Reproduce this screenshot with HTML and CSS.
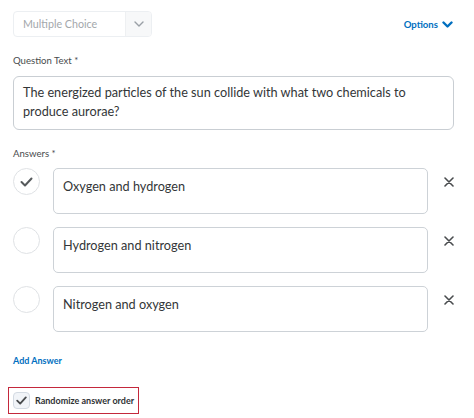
FILE: index.html
```html
<!DOCTYPE html>
<html>
<head>
<meta charset="utf-8">
<link rel="stylesheet" href="styles.css">
</head>
<body>
<div class="page">
  <div class="toprow">
    <div class="select">
      <span class="select-text">Multiple Choice</span>
      <span class="select-btn">
        <svg width="10" height="6" viewBox="0 0 10 6"><path d="M1 1 L5 5 L9 1" fill="none" stroke="#9aa0a6" stroke-width="1.4" stroke-linecap="round" stroke-linejoin="round"/></svg>
      </span>
    </div>
    <div class="options">Options
      <svg width="11" height="8" viewBox="0 0 11 8"><path d="M1.5 1.5 L5.5 5.5 L9.5 1.5" fill="none" stroke="#006fbf" stroke-width="2.4" stroke-linecap="round" stroke-linejoin="round"/></svg>
    </div>
  </div>

  <div class="label q-label">Question Text *</div>
  <div class="textarea">The energized particles of the sun collide with what two chemicals to produce aurorae?</div>

  <div class="label a-label">Answers *</div>
  <div class="answers">
    <div class="answer">
      <span class="radio">
        <svg width="13" height="10" viewBox="0 0 13 10"><path d="M1.5 5 L5 8.5 L11.5 1.5" fill="none" stroke="#565a5c" stroke-width="2" stroke-linecap="round" stroke-linejoin="round"/></svg>
      </span>
      <div class="abox">Oxygen and hydrogen</div>
      <span class="remove">
        <svg width="10" height="10" viewBox="0 0 10 10"><path d="M1 1 L9 9 M9 1 L1 9" stroke="#494c4e" stroke-width="1.6" stroke-linecap="round"/></svg>
      </span>
    </div>
    <div class="answer">
      <span class="radio"></span>
      <div class="abox">Hydrogen and nitrogen</div>
      <span class="remove">
        <svg width="10" height="10" viewBox="0 0 10 10"><path d="M1 1 L9 9 M9 1 L1 9" stroke="#494c4e" stroke-width="1.6" stroke-linecap="round"/></svg>
      </span>
    </div>
    <div class="answer">
      <span class="radio"></span>
      <div class="abox">Nitrogen and oxygen</div>
      <span class="remove">
        <svg width="10" height="10" viewBox="0 0 10 10"><path d="M1 1 L9 9 M9 1 L1 9" stroke="#494c4e" stroke-width="1.6" stroke-linecap="round"/></svg>
      </span>
    </div>
  </div>

  <div class="add">Add Answer</div>

  <div class="randomize">
    <span class="checkbox">
      <svg width="11" height="9" viewBox="0 0 11 9"><path d="M1.2 4.6 L4.2 7.6 L9.8 1.4" fill="none" stroke="#494c4e" stroke-width="1.8" stroke-linecap="round" stroke-linejoin="round"/></svg>
    </span>
    <span class="rand-text">Randomize answer order</span>
  </div>
</div>
</body>
</html>
```

FILE: styles.css
```css
* { box-sizing: border-box; }
html, body { margin: 0; padding: 0; background: #fff; }
body {
  font-family: Lato, "Noto Sans", sans-serif;
  color: #494c4e;
  width: 474px;
  height: 418px;
  overflow: hidden;
}
.page {
  padding: 11px 20px 0 13px;
}
.toprow {
  display: flex;
  justify-content: space-between;
  align-items: center;
  height: 26px;
}
.select {
  display: flex;
  width: 139px;
  height: 26px;
  border: 1px solid #eceff2;
  border-radius: 4px;
  overflow: hidden;
}
.select-text {
  flex: 1;
  padding-left: 9px;
  font-size: 10.7px;
  line-height: 24px;
  color: #a3a7ab;
}
.select-btn {
  width: 26px;
  background: #f7f8f9;
  border-left: 1px solid #eef0f2;
  display: flex;
  align-items: center;
  justify-content: center;
}
.options {
  display: flex;
  align-items: center;
  gap: 4px;
  color: #006fbf;
  font-size: 9.6px;
  font-weight: 700;
  margin-top: 1px;
  margin-right: 1px;
}
.label {
  font-size: 9.6px;
  color: #494c4e;
  line-height: 12px;
}
.q-label { margin-top: 18px; }
.textarea {
  margin-top: 9px;
  width: 441px;
  height: 54px;
  border: 1px solid #c9ced3;
  border-radius: 6px;
  padding: 6px 9px;
  font-size: 12.7px;
  line-height: 19px;
  color: #333638;
}
.a-label { margin-top: 18px; }
.answers {
  margin-top: 8px;
  display: flex;
  flex-direction: column;
  gap: 13px;
}
.answer {
  display: flex;
  align-items: flex-start;
  height: 46px;
}
.radio {
  width: 27px;
  height: 27px;
  border: 1px solid #dfe2e5;
  border-radius: 50%;
  display: flex;
  align-items: center;
  justify-content: center;
  flex: none;
}
.abox {
  margin-left: 13px;
  width: 376px;
  height: 46px;
  border: 1px solid #cdd2d7;
  border-radius: 5px;
  padding: 8px 9px;
  font-size: 12.7px;
  line-height: 19px;
  color: #333638;
}
.remove {
  margin-left: 16px;
  margin-top: 9px;
  display: flex;
}
.add {
  margin-top: 23px;
  font-size: 9px;
  font-weight: 700;
  color: #006fbf;
}
.randomize {
  margin-top: 21px;
  margin-left: -5px;
  width: 131px;
  height: 27px;
  border: 1.5px solid #c4283c;
  display: flex;
  align-items: center;
  padding-left: 4px;
  white-space: nowrap;
}
.checkbox {
  width: 17px;
  height: 17px;
  border: 1px solid #d3dae2;
  background: #f1f4f8;
  border-radius: 4px;
  display: flex;
  align-items: center;
  justify-content: center;
}
.rand-text {
  margin-left: 5px;
  font-size: 9px;
  font-weight: 700;
  color: #2f3234;
}
```
